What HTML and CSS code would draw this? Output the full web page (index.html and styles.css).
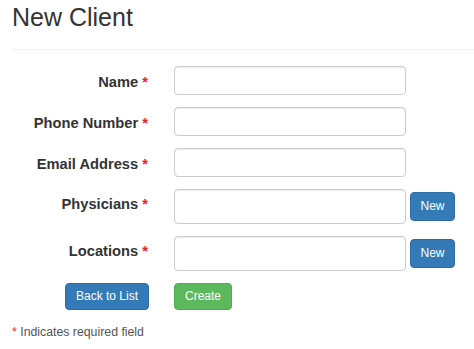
FILE: index.html
```html
<!DOCTYPE html>
<html lang="en">
<head>
  <meta charset="UTF-8" />
  <meta name="viewport" content="width=device-width, initial-scale=1" />
  <title>New Client</title>
  <link rel="stylesheet" href="styles.css">
</head>
<body>
  <div class="page">
    <h1>New Client</h1>
    <hr />

    <form class="client-form">
      <label class="field-label" for="name">Name <span class="req">*</span></label>
      <div class="field-group">
        <input type="text" id="name" class="field-input" />
      </div>

      <label class="field-label" for="phone">Phone Number <span class="req">*</span></label>
      <div class="field-group">
        <input type="text" id="phone" class="field-input" />
      </div>

      <label class="field-label" for="email">Email Address <span class="req">*</span></label>
      <div class="field-group">
        <input type="text" id="email" class="field-input" />
      </div>

      <label class="field-label tall" for="physicians">Physicians <span class="req">*</span></label>
      <div class="field-group">
        <input type="text" id="physicians" class="field-input tall" />
        <button type="button" class="btn btn-primary btn-new">New</button>
      </div>

      <label class="field-label tall" for="locations">Locations <span class="req">*</span></label>
      <div class="field-group">
        <input type="text" id="locations" class="field-input tall" />
        <button type="button" class="btn btn-primary btn-new">New</button>
      </div>

      <div class="actions-left">
        <button type="button" class="btn btn-primary">Back to List</button>
      </div>
      <div class="field-group">
        <button type="submit" class="btn btn-success">Create</button>
      </div>
    </form>

    <p class="note"><span class="req">*</span> Indicates required field</p>
  </div>
</body>
</html>
```

FILE: styles.css
```css
* { box-sizing: border-box; }
body {
  margin: 0;
  padding: 0;
  font-family: "Liberation Sans", Arial, sans-serif;
  color: #333;
  background-color: #fff;
}
.page {
  padding-left: 12px;
}
h1 {
  margin: 4px 0 0;
  font-size: 25px;
  font-weight: normal;
  line-height: 1.1;
  color: #333;
}
hr {
  margin: 17px 0 16px;
  border: 0;
  border-top: 1px solid #eee;
}
.client-form {
  display: grid;
  grid-template-columns: 136px auto;
  column-gap: 26px;
  row-gap: 12px;
  justify-content: start;
}
.field-label {
  text-align: right;
  font-weight: bold;
  font-size: 14.7px;
  line-height: 20px;
  padding-top: 6px;
  white-space: nowrap;
}
.field-label.tall { padding-top: 5px; }
.req {
  color: #e8212d;
}
.field-group {
  display: flex;
  align-items: flex-start;
  gap: 4px;
}
.field-input {
  height: 29px;
  width: 232px;
  border: 1px solid #ccc;
  border-radius: 4px;
  box-shadow: inset 0 1px 1px rgba(0,0,0,0.075);
  font-size: 14px;
  padding: 4px 8px;
}
.field-input.tall { height: 35px; }
.btn {
  font-family: "Liberation Sans", Arial, sans-serif;
  font-size: 12px;
  height: 27px;
  padding: 0 10px;
  border-radius: 4px;
  border: 1px solid transparent;
  color: #fff;
  cursor: pointer;
}
.btn-primary {
  background-color: #337ab7;
  border-color: #2e6da4;
}
.btn-success {
  background-color: #5cb85c;
  border-color: #4cae4c;
}
.btn-new {
  height: 29px;
  width: 45px;
  padding: 0;
  margin-top: 3px;
}
.actions-left {
  display: flex;
  justify-content: flex-end;
  margin-right: -1px;
}
.note {
  margin: 13px 0 0;
  font-size: 12.3px;
  line-height: 18px;
  color: #555;
}
```
